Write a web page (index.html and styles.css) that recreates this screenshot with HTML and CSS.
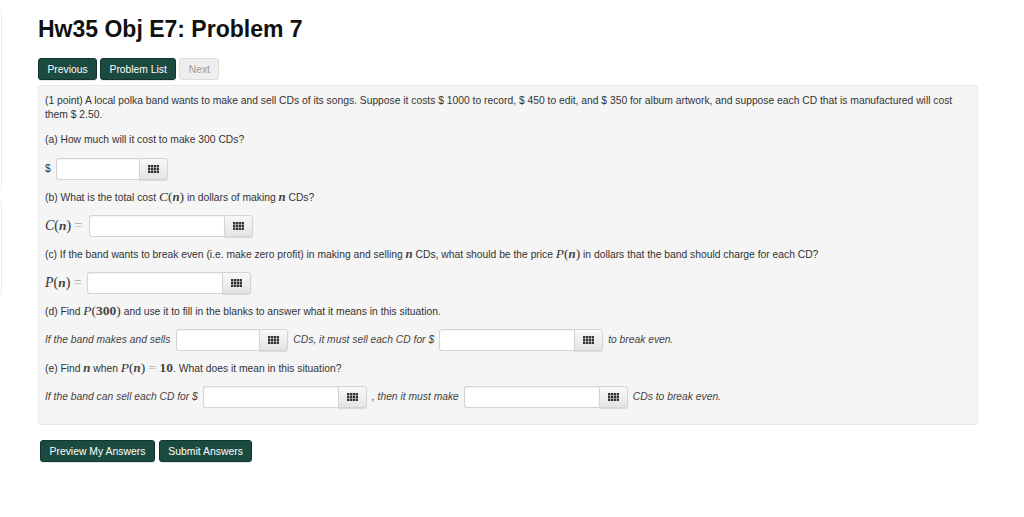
FILE: index.html
```html
<!DOCTYPE html>
<html lang="en">
<head>
<meta charset="utf-8">
<title>Hw35 Obj E7: Problem 7</title>
<link rel="stylesheet" href="styles.css">
</head>
<body>
<svg class="defs" width="0" height="0"><symbol id="grid" viewBox="0 0 11 8"><path d="M0 0h2.3v2.3H0zM2.9 0h2.3v2.3H2.9zM5.8 0h2.3v2.3H5.8zM8.7 0H11v2.3H8.7zM0 2.85h2.3v2.3H0zM2.9 2.85h2.3v2.3H2.9zM5.8 2.85h2.3v2.3H5.8zM8.7 2.85H11v2.3H8.7zM0 5.7h2.3V8H0zM2.9 5.7h2.3V8H2.9zM5.8 5.7h2.3V8H5.8zM8.7 5.7H11V8H8.7z"/></symbol></svg>
<div class="side-card side-card-top"></div>
<div class="side-card side-card-bottom"></div>
<main class="page">
  <h1 class="title">Hw35 Obj E7: Problem 7</h1>
  <nav class="nav">
    <a class="btn">Previous</a>
    <a class="btn">Problem List</a>
    <a class="btn btn-off">Next</a>
  </nav>
  <section class="well">
    <p class="intro">(1 point) A local polka band wants to make and sell CDs of its songs. Suppose it costs $ 1000 to record, $ 450 to edit, and $ 350 for album artwork, and suppose each CD that is manufactured will cost them $ 2.50.</p>
    <p class="text">(a) How much will it cost to make 300 CDs?</p>
    <div class="row">
      <span class="label-a">$</span>
      <span class="field"><input class="input w-a"><span class="addon"><svg class="grid-icon"><use href="#grid"/></svg></span></span>
    </div>
    <p class="text">(b) What is the total cost <span class="math"><i>C</i>(<i class="var">n</i>)</span> in dollars of making <span class="math"><i class="var">n</i></span> CDs?</p>
    <div class="row">
      <span class="math math-label m-c"><i>C</i>(<i class="var">n</i>) <span class="eq">=</span></span>
      <span class="field"><input class="input w-b"><span class="addon"><svg class="grid-icon"><use href="#grid"/></svg></span></span>
    </div>
    <p class="text">(c) If the band wants to break even (i.e. make zero profit) in making and selling <span class="math"><i class="var">n</i></span> CDs, what should be the price <span class="math"><i>P</i>(<i class="var">n</i>)</span> in dollars that the band should charge for each CD?</p>
    <div class="row">
      <span class="math math-label m-p"><i>P</i>(<i class="var">n</i>) <span class="eq">=</span></span>
      <span class="field"><input class="input w-b"><span class="addon"><svg class="grid-icon"><use href="#grid"/></svg></span></span>
    </div>
    <p class="text">(d) Find <span class="math"><i>P</i>(<span class="num">300</span>)</span> and use it to fill in the blanks to answer what it means in this situation.</p>
    <div class="row row-em">
      <em class="lead-d">If the band makes and sells</em>
      <span class="field"><input class="input w-c"><span class="addon"><svg class="grid-icon"><use href="#grid"/></svg></span></span>
      <em>CDs, it must sell each CD for $</em>
      <span class="field"><input class="input w-d"><span class="addon"><svg class="grid-icon"><use href="#grid"/></svg></span></span>
      <em>to break even.</em>
    </div>
    <p class="text">(e) Find <span class="math"><i class="var">n</i></span> when <span class="math"><i>P</i>(<i class="var">n</i>) <span class="eq">=</span> <span class="num">10</span></span>. What does it mean in this situation?</p>
    <div class="row row-em">
      <em>If the band can sell each CD for $</em>
      <span class="field"><input class="input w-d"><span class="addon"><svg class="grid-icon"><use href="#grid"/></svg></span></span>
      <em>, then it must make</em>
      <span class="field"><input class="input w-d"><span class="addon"><svg class="grid-icon"><use href="#grid"/></svg></span></span>
      <em>CDs to break even.</em>
    </div>
  </section>
  <div class="actions">
    <a class="btn">Preview My Answers</a>
    <a class="btn">Submit Answers</a>
  </div>
</main>
</body>
</html>
```
FILE: styles.css
```css
* { box-sizing: border-box; }
html, body { margin: 0; padding: 0; background: #fff; }
body { font-family: "Liberation Sans", Arial, sans-serif; color: #333; height: 517px; overflow: hidden; position: relative; }
.defs { position: absolute; }
.side-card { position: absolute; left: -6px; width: 8px; border: 1px solid #ececec; border-radius: 4px; background: #fff; }
.side-card-top { top: 9px; height: 182px; }
.side-card-bottom { top: 200px; height: 96px; }
.page { width: 940px; margin-left: 38px; display: flex; flex-direction: column; }
.title { margin: 16px 0 0; font-size: 23px; line-height: 27px; font-weight: 700; color: #111; }
.nav { display: flex; gap: 3px; margin-top: 15px; font-size: 10.3px; }
.btn { display: inline-flex; align-items: center; justify-content: center; height: 22px; padding: 0 8.5px; color: #fff; background: #1a4a40; border: 1px solid #12352e; border-radius: 3px; box-shadow: 0 1px 1px rgba(0,0,0,.1); }
.btn-off { background: #eee; color: #999; border-color: #ddd; box-shadow: none; }
.well { margin-top: 5px; height: 340px; padding: 7.5px 6px 0; background: #f5f5f5; border: 1px solid #e8e8e8; border-radius: 3px; display: flex; flex-direction: column; gap: 10.5px; font-size: 10.3px; color: #333; }
.text { margin: 0; height: 14px; line-height: 14px; white-space: nowrap; }
.intro { margin: 0 0 1px; line-height: 14px; width: 915px; }
.math { font-family: "Liberation Serif", "DejaVu Serif", serif; font-size: 13.5px; line-height: 14px; color: #333; }
.var { font-weight: 700; color: #444; font-size: .95em; }
.num { font-weight: 700; color: #444; }
.eq { color: #aaa; }
.row { display: flex; align-items: center; height: 22px; }
.row-em em { color: #444; }
.label-a { width: 11px; }
.math-label { font-size: 14px; white-space: nowrap; }
.m-c { width: 44px; }
.m-p { width: 42px; }
.field { display: inline-flex; height: 22px; }
.row-em .field { margin: 0 5px; }
.lead-d { margin-right: 1px; }
.input { height: 22px; border: 1px solid #d4d4d4; border-right: 0; border-radius: 3px 0 0 3px; background: #fff; padding: 0; outline: none; box-shadow: inset 0 1px 1px rgba(0,0,0,.05); }
.addon { display: flex; align-items: center; justify-content: center; width: 29px; height: 22px; border: 1px solid #d4d4d4; border-radius: 0 3px 3px 0; background: linear-gradient(#f8f8f8, #e4e4e4); box-shadow: 0 1px 1px rgba(0,0,0,.12); }
.grid-icon { width: 11px; height: 8px; fill: #333; }
.w-a { width: 83px; }
.w-b { width: 135px; }
.w-c { width: 83px; }
.w-d { width: 135px; }
.actions { display: flex; gap: 4px; margin: 15px 0 0 2px; font-size: 10.4px; }
```
